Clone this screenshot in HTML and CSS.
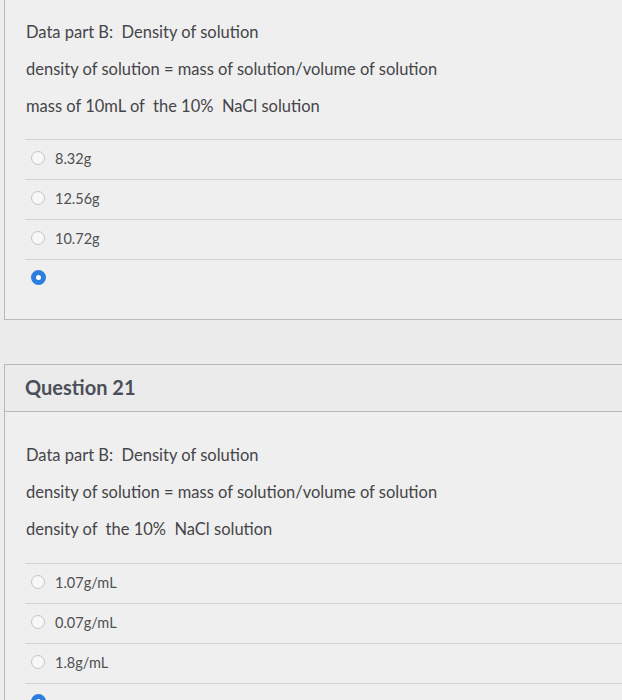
FILE: index.html
```html
<!DOCTYPE html>
<html lang="en">
<head>
    <meta charset="UTF-8">
    <meta name="viewport" content="width=device-width, initial-scale=1.0">
    <title>Quiz - Density of solution</title>
    <link rel="stylesheet" href="styles.css">
</head>
<body>
    <div class="quiz">
        <div class="question first">
            <div class="question-text">
                <p>Data part B:&nbsp; Density of solution</p>
                <p>density of solution = mass of solution/volume of solution</p>
                <p>mass of 10mL of&nbsp; the 10%&nbsp; NaCl solution</p>
            </div>
            <div class="answers">
                <div class="answer"><span class="radio"></span><span>8.32g</span></div>
                <div class="answer"><span class="radio"></span><span>12.56g</span></div>
                <div class="answer"><span class="radio"></span><span>10.72g</span></div>
                <div class="answer"><span class="radio checked"></span><span></span></div>
            </div>
        </div>

        <div class="question">
            <div class="question-header">Question 21</div>
            <div class="question-text">
                <p>Data part B:&nbsp; Density of solution</p>
                <p>density of solution = mass of solution/volume of solution</p>
                <p>density of&nbsp; the 10%&nbsp; NaCl solution</p>
            </div>
            <div class="answers">
                <div class="answer"><span class="radio"></span><span>1.07g/mL</span></div>
                <div class="answer"><span class="radio"></span><span>0.07g/mL</span></div>
                <div class="answer"><span class="radio"></span><span>1.8g/mL</span></div>
                <div class="answer"><span class="radio checked"></span><span></span></div>
            </div>
        </div>
    </div>
</body>
</html>
```

FILE: styles.css
```css
body {
    font-family: Lato, 'Open Sans', sans-serif;
    color: #454549;
    margin: 0;
    padding: 0 0 0 4px;
    background-color: #ececec;
    overflow: hidden;
}
.quiz {
    width: 660px;
}
.question {
    background-color: #efefef;
    border: 1px solid #b9b9b9;
    margin-bottom: 44px;
}
.question.first {
    border-top-color: transparent;
    margin-top: -2px;
}
.question-header {
    background-color: #ebebeb;
    border-bottom: 1px solid #b9b9b9;
    padding: 10px 20px 12px;
    font-size: 20px;
    font-weight: bold;
    color: #4b4f5a;
}
.question-text {
    padding: 34px 21px 0;
    font-size: 16.5px;
}
.question.first .question-text {
    padding-top: 24px;
}
.question-text p {
    margin: 0 0 19px;
    line-height: 18px;
}
.question-text p:last-child {
    margin-bottom: 25px;
}
.question.first .question-text p:last-child {
    margin-bottom: 24px;
}
.answers {
    margin-left: 20px;
    padding-bottom: 20px;
}
.answer {
    display: flex;
    align-items: center;
    border-top: 1px solid #d3d3d3;
    height: 39px;
    font-size: 14.5px;
    color: #505052;
}
.answer span:last-child {
    margin-top: -3px;
}
.radio {
    width: 14px;
    height: 14px;
    border: 1px solid #c4c4c4;
    border-radius: 50%;
    background-color: #f7f7f7;
    margin: -4px 10px 0 6px;
    box-sizing: border-box;
}
.radio.checked {
    border: 5px solid #2b7de0;
    background-color: #fff;
    width: 15px;
    height: 15px;
}
```
